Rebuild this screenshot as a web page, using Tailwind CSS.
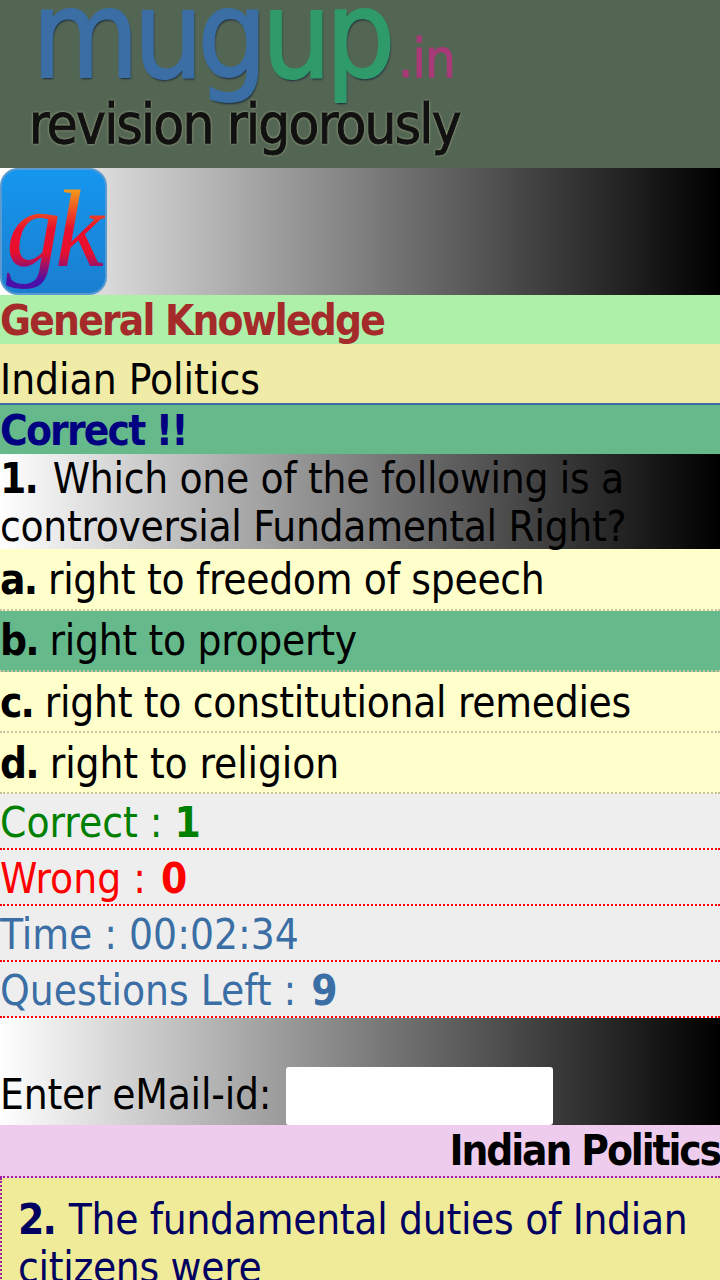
<!DOCTYPE html>
<html lang="en">
<head>
    <meta charset="UTF-8">
    <meta name="viewport" content="width=device-width, initial-scale=1.0">
    <script src="https://cdn.jsdelivr.net/npm/@tailwindcss/browser@4"></script>
    <title>mugup.in</title>
</head>
<body class="bg-white">
<div class="h-[1280px] w-[720px] overflow-hidden font-['DejaVu_Sans_Condensed','DejaVu_Sans',sans-serif] text-[42px] leading-[48px] text-black">
    <!-- Logo -->
    <div class="h-[168px] bg-[#536553] overflow-hidden pl-[32px]">
        <div class="flex h-[96px] items-baseline">
            <span class="text-[122px] leading-[70px] tracking-[-5.5px] [-webkit-text-stroke:2px] [text-shadow:1px_2px_2px_#1c2c3c]"><span class="text-[#3a6ea5]">mug</span><span class="text-[#2f9a6a]">up</span></span>
            <span class="ml-[8px] text-[54px] leading-[70px] tracking-[-1px] text-[#a83a78] [-webkit-text-stroke:1px]">.in</span>
        </div>
        <div class="-ml-[3px] text-[56px] leading-[56px] tracking-[-1.7px] text-[#111] [-webkit-text-stroke:1px] [text-shadow:0_0_3px_#d8d8a8]">revision rigorously</div>
    </div>

    <!-- Icon bar -->
    <div class="h-[127px] bg-[linear-gradient(to_right,#fff,#000)]">
        <div class="relative h-[127px] w-[107px] overflow-hidden rounded-[18px] border-2 border-[#5b9ad0] bg-[linear-gradient(to_bottom,#1596ee,#1a7fd0)]">
            <span class="absolute left-[4px] top-[-6px] bg-[linear-gradient(to_bottom,#f5c518_10%,#e8102c_50%,#e8102c_68%,#4a10a8_90%)] bg-clip-text pr-3 font-['Liberation_Serif',serif] text-[110px] leading-[130px] tracking-[-6px] text-transparent italic">gk</span>
        </div>
    </div>

    <div class="h-[49px] bg-[#aeefa9] pt-[2px] font-bold tracking-[-1.8px] text-[#a52a2a]">General Knowledge</div>
    <div class="h-[61px] border-b-2 border-[#3a6ea5] bg-[#f0eba6] pt-[12px]">Indian Politics</div>
    <div class="h-[49px] bg-[#66b98a] pt-[2px] font-bold tracking-[-1.8px] text-[#000080]">Correct !!</div>

    <!-- Question -->
    <div class="h-[95px] bg-[linear-gradient(to_right,#fff,#000)] pt-[1px] tracking-[-0.3px]"><b class="mr-[4px] tracking-[-1.8px]">1.</b> Which one of the following is a controversial Fundamental Right?</div>

    <!-- Options -->
    <div class="flex h-[62px] items-center border-b-2 border-dotted border-[#c4c4a0] bg-[#ffffcc] pt-[2px] tracking-[-0.3px]"><b class="tracking-[-1.8px]">a.</b>&nbsp;right to freedom of speech</div>
    <div class="flex h-[61px] items-center border-b-2 border-dotted border-[#c4c4a0] bg-[#66b98a] tracking-[-0.3px]"><b class="tracking-[-1.8px]">b.</b>&nbsp;right to property</div>
    <div class="flex h-[61px] items-center border-b-2 border-dotted border-[#c4c4a0] bg-[#ffffcc] pt-[2px] tracking-[-0.3px]"><b class="tracking-[-1.8px]">c.</b>&nbsp;right to constitutional remedies</div>
    <div class="flex h-[61px] items-center border-b-2 border-dotted border-[#c4c4a0] bg-[#ffffcc] pt-[2px] tracking-[-0.1px]"><b class="tracking-[-1.8px]">d.</b>&nbsp;right to religion</div>

    <!-- Score -->
    <div class="flex h-[56px] items-center border-b-2 border-dotted border-[#ff0000] bg-[#eeeeee] pt-[4px] text-[#008000]">Correct :&nbsp;<b>1</b></div>
    <div class="flex h-[56px] items-center border-b-2 border-dotted border-[#ff0000] bg-[#eeeeee] pt-[4px] text-[#ff0000]">Wrong :&nbsp;<b class="ml-[3px]">0</b></div>
    <div class="flex h-[56px] items-center border-b-2 border-dotted border-[#ff0000] bg-[#eeeeee] pt-[4px] text-[#3a6ea5]">Time : 00:02:34</div>
    <div class="flex h-[56px] items-center border-b-2 border-dotted border-[#ff0000] bg-[#eeeeee] pt-[4px] text-[#3a6ea5]">Questions Left :&nbsp;<b class="ml-[3px]">9</b></div>

    <!-- Email -->
    <div class="flex h-[107px] items-end bg-[linear-gradient(to_right,#fff,#000)]">
        <span class="mb-[6px] w-[286px] tracking-[-0.2px]">Enter eMail-id:</span>
        <div class="h-[58px] w-[267px] rounded-[3px] bg-white"></div>
    </div>

    <!-- Next question -->
    <div class="h-[53px] border-b-2 border-dotted border-[#a020a0] bg-[#eeccee] pt-[2px] text-right font-bold tracking-[-2.1px]">Indian Politics</div>
    <div class="h-[200px] border-l-2 border-dotted border-[#a020a0] bg-[#f0eb98] pl-4 pt-[18px] tracking-[-0.3px] text-[#000060]"><b class="mr-[2px] tracking-[-1.8px]">2.</b> The fundamental duties of Indian citizens were</div>
</div>
</body>
</html>
